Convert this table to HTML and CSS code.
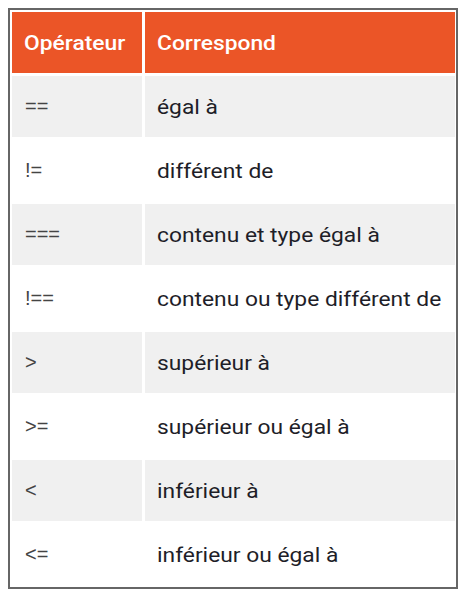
FILE: index.html
```html
<!DOCTYPE html>
<html lang="fr">
<head>
<meta charset="utf-8">
<link rel="stylesheet" href="styles.css">
</head>
<body>
<div class="table">
  <div class="cell head"><span class="t">Opérateur</span></div><div class="cell head"><span class="t">Correspond</span></div>
  <div class="cell op alt">==</div><div class="cell alt"><span class="t">égal à</span></div>
  <div class="cell op">!=</div><div class="cell"><span class="t">différent de</span></div>
  <div class="cell op alt">===</div><div class="cell alt"><span class="t">contenu et type égal à</span></div>
  <div class="cell op">!==</div><div class="cell"><span class="t">contenu ou type différent de</span></div>
  <div class="cell op alt">&gt;</div><div class="cell alt"><span class="t">supérieur à</span></div>
  <div class="cell op">&gt;=</div><div class="cell"><span class="t">supérieur ou égal à</span></div>
  <div class="cell op alt">&lt;</div><div class="cell alt"><span class="t">inférieur à</span></div>
  <div class="cell op">&lt;=</div><div class="cell"><span class="t">inférieur ou égal à</span></div>
</div>
</body>
</html>
```
FILE: styles.css
```css
html, body { margin: 0; padding: 0; background: #fff; }
body { padding: 8px; font-family: Roboto, "Open Sans", sans-serif; }
.table {
  width: 450px;
  box-sizing: border-box;
  border: 2px solid #666;
  padding: 2px 1px 2px 2px;
  display: grid;
  grid-template-columns: 130px 1fr;
  grid-auto-rows: 61px;
  gap: 3px;
}
.cell {
  display: flex;
  align-items: center;
  padding: 0 12px;
  font-size: 20px;
  color: #1e1e28;
  background: #fff;
  white-space: nowrap;
}
.t {
  display: inline-block;
  transform: scaleX(1.14);
  transform-origin: left center;
}
.cell.alt { background: #f0f0f0; }
.cell.op {
  padding-left: 13px;
  color: #444;
  font-family: "Liberation Sans", Arial, sans-serif;
  font-size: 20px;
}
.cell.head {
  background: #eb5527;
  color: #fff;
  font-size: 20px;
  font-weight: 500;
}
```
